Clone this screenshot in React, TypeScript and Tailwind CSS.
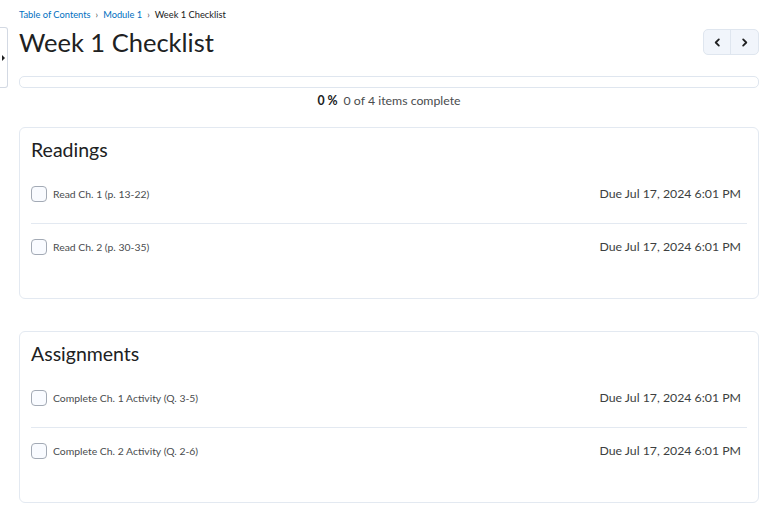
import React from "react";

const Item = ({ label, last }: { label: string; last?: boolean }) => (
  <div className={`flex items-center justify-between h-[53px] pt-[15px] pb-[22px] ${last ? "" : "border-b border-[#e3e9f1]"}`}>
    <div className="flex items-center gap-[6px]">
      <div className="w-[16px] h-[16px] rounded-[4px] border border-[#a3aab5] bg-[#f9fbff]" />
      <span className="text-[10.4px] leading-[16px] text-[#494c4e]">{label}</span>
    </div>
    <span className="text-[12.3px] leading-[16px] text-[#3d3f41] pr-[6px]">Due Jul 17, 2024 6:01 PM</span>
  </div>
);

const Card = ({ title, items }: { title: string; items: string[] }) => (
  <div className="border border-[#e3e9f1] rounded-[6px] px-[11px] pt-[8px] pb-[21px]">
    <h2 className="text-[19.5px] text-[#202122] leading-[28px] mb-[7px]">{title}</h2>
    <div className="flex flex-col">
      {items.map((it, i) => (
        <Item key={it} label={it} last={i === items.length - 1} />
      ))}
    </div>
  </div>
);

export default function App() {
  return (
    <div className="relative w-[768px] h-[512px] bg-white overflow-hidden" style={{ fontFamily: "Lato, 'Noto Sans', sans-serif" }}>
      <div className="absolute left-0 top-[27px] w-[8px] h-[61px] border border-l-0 border-[#d3d9e3] rounded-r-[3px] bg-white flex items-center justify-center">
        <div className="w-0 h-0 border-y-[3px] border-y-transparent border-l-[3px] border-l-[#202122]" />
      </div>
      <div className="px-[19px] pr-[9px]">
        <div className="pt-[9px] flex items-center text-[9.3px] leading-[12px]">
          <span className="text-[#006fbf]">Table of Contents</span>
          <span className="mx-[5px] text-[#494c4e] text-[9px]">›</span>
          <span className="text-[#006fbf]">Module 1</span>
          <span className="mx-[5px] text-[#494c4e] text-[9px]">›</span>
          <span className="text-[#202122]">Week 1 Checklist</span>
        </div>
        <div className="flex items-center justify-between mt-[4px] h-[34px]">
          <h1 className="text-[25.5px] text-[#202122] leading-[34px]">Week 1 Checklist</h1>
          <div className="flex h-[26px] rounded-[5px] border border-[#dfe6ef] bg-[#f1f5fb] overflow-hidden">
            <div className="w-[27px] flex items-center justify-center border-r border-[#dfe6ef]">
              <svg width="9" height="9" viewBox="0 0 10 10"><path d="M6.5 1.5 L3 5 L6.5 8.5" stroke="#202122" strokeWidth="2" fill="none" strokeLinecap="round" strokeLinejoin="round" /></svg>
            </div>
            <div className="w-[27px] flex items-center justify-center">
              <svg width="9" height="9" viewBox="0 0 10 10"><path d="M3.5 1.5 L7 5 L3.5 8.5" stroke="#202122" strokeWidth="2" fill="none" strokeLinecap="round" strokeLinejoin="round" /></svg>
            </div>
          </div>
        </div>
        <div className="mt-[17px] h-[12px] border border-[#dfe6ef] rounded-[5px] bg-white" />
        <div className="mt-[4px] text-center text-[12.3px] leading-[18px] text-[#202122]">
          <span className="font-bold">0 %</span>
          <span className="ml-[6px] text-[#494c4e]">0 of 4 items complete</span>
        </div>
        <div className="mt-[17px] flex flex-col gap-[32px]">
          <Card title="Readings" items={["Read Ch. 1 (p. 13-22)", "Read Ch. 2 (p. 30-35)"]} />
          <Card title="Assignments" items={["Complete Ch. 1 Activity (Q. 3-5)", "Complete Ch. 2 Activity (Q. 2-6)"]} />
        </div>
      </div>
    </div>
  );
}
